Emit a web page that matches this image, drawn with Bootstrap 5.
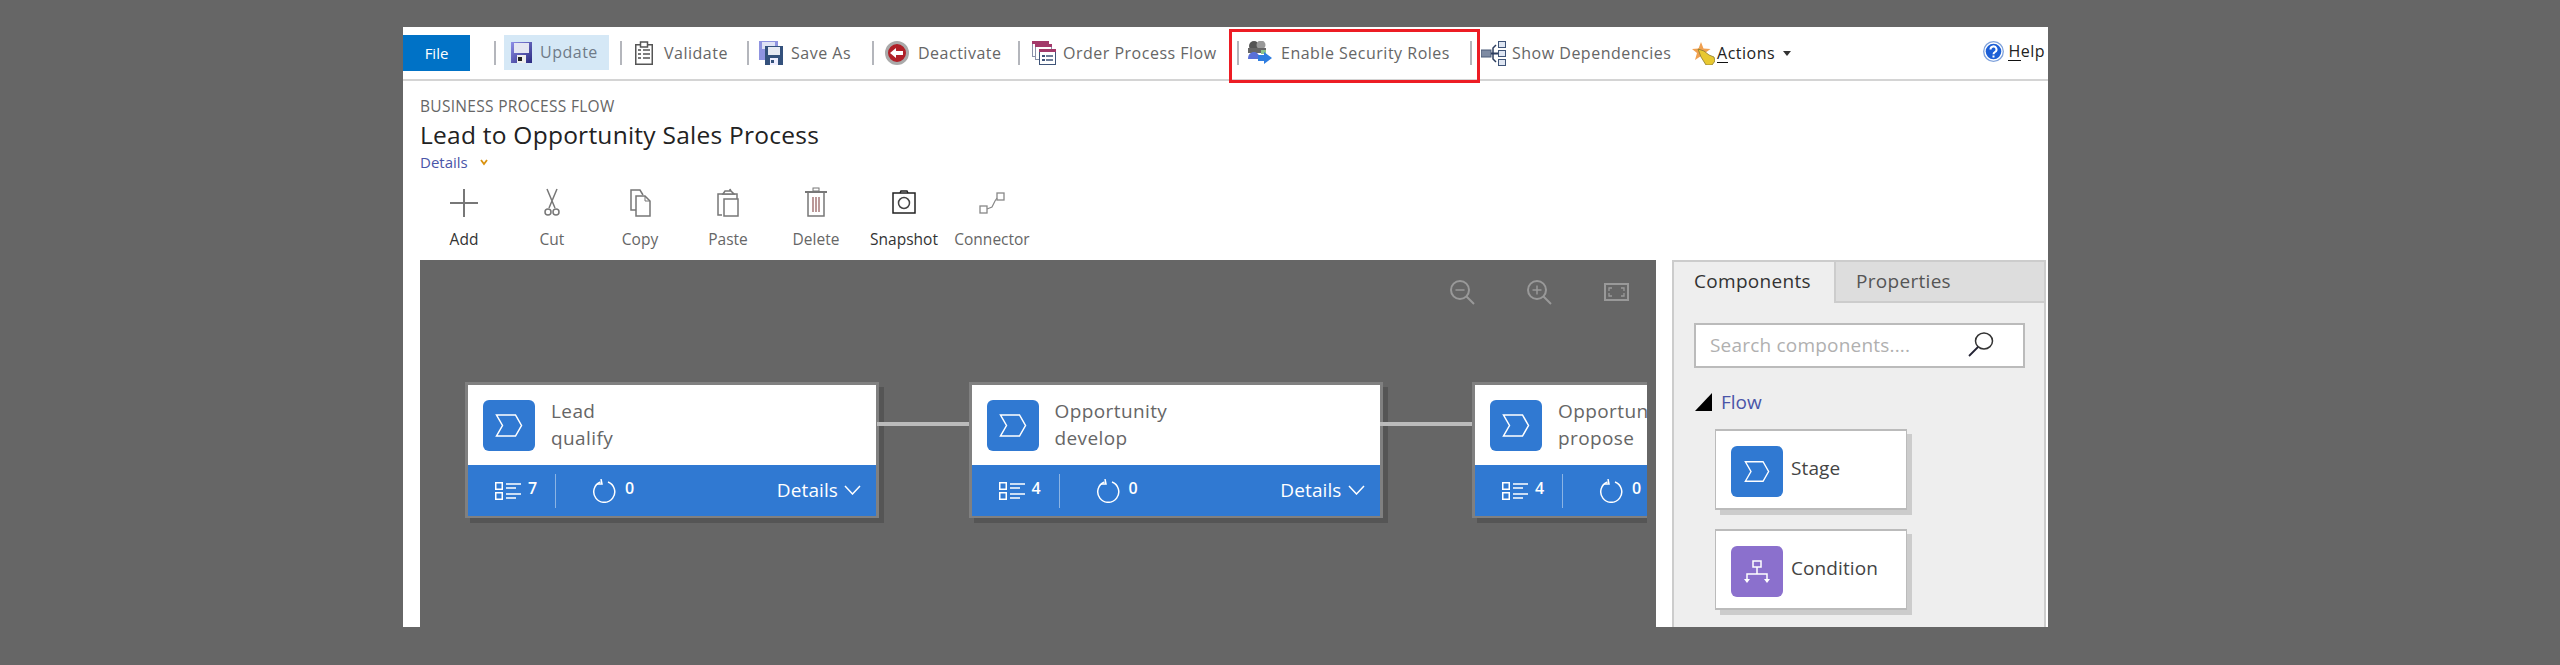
<!DOCTYPE html>
<html lang="en">
<head>
<meta charset="utf-8">
<title>Lead to Opportunity Sales Process</title>
<link href="https://cdn.jsdelivr.net/npm/bootstrap@5.3.0/dist/css/bootstrap.min.css" rel="stylesheet">
<style>
html,body{height:100%;overflow:hidden}
body{background:#666;font-family:"Open Sans","Liberation Sans",sans-serif;color:#555;margin:0}
.shell{margin:27px 0 0 403px;width:1645px;height:600px;background:#fff;overflow:hidden;position:relative}
.tbar{height:54px;border-bottom:2px solid #d4d4d4;font-size:16px;letter-spacing:.5px;line-height:20px;color:#666}
.tb-cell{flex:0 0 auto;height:52px}
.tb-sep{flex:0 0 2px;height:24px;background:#b4b6bc;margin-top:-1px}
.tb-btn{color:#666;text-decoration:none;white-space:nowrap}
.tb-btn svg{flex:0 0 auto;display:block}
.file-cell{width:91px}
.file-btn{--bs-btn-padding-x:0;--bs-btn-padding-y:0;--bs-btn-bg:#0072c6;--bs-btn-border-color:#0072c6;width:67px;height:36px;margin-top:-1px;line-height:34px;font-size:15px;font-weight:500;letter-spacing:0;color:#fff}
.c-update{width:126px}.c-update .tb-btn{margin-left:8px;width:105px;height:35px;padding-left:7px;background:#d5e8f6;gap:8px;margin-top:-2px;color:#6f7b88}
.c-validate{width:127px}.c-validate .tb-btn{margin-left:13px;gap:11px}
.c-saveas{width:125px}.c-saveas .tb-btn{margin-left:10px;gap:8px}
.c-deact{width:146px}.c-deact .tb-btn{margin-left:11px;gap:9px}
.c-order{width:219px}.c-order .tb-btn{margin-left:12px;gap:7px}
.c-enable{width:233px}.c-enable .tb-btn{margin-left:9px;gap:9px}
.c-show{width:222px}.c-show .tb-btn{margin-left:9px;gap:6px}
.c-actions .tb-btn{gap:2px;color:#222}
.c-help{margin-left:auto;padding-right:3px;color:#222;gap:4px;margin-top:-4px}
.c-help .tb-btn{color:#222}
.ul-key{border-bottom:1px solid #111;padding-bottom:0;display:inline-block;line-height:17px}
.caret-down{width:0;height:0;border:4px solid transparent;border-top:5px solid #333;border-bottom:0;margin-left:6px}
.red-box{position:absolute;left:826px;top:2px;width:251px;height:54px;border:3px solid #ed1c24;pointer-events:none}
.head-block{padding:16px 0 0 17px}
.crumb{font-size:15.5px;line-height:19px;letter-spacing:.3px;color:#666}
.page-title{font-size:24.5px;line-height:32px;font-weight:400;color:#222;margin:3px 0 0;letter-spacing:.25px}
.det-link{font-size:15px;line-height:18px;color:#4a55a8;gap:12px;margin-top:2px}
.cmds{margin:16px 0 0 17px;height:73px}
.cmd{flex:0 0 88px;font-size:15.5px;line-height:20px;text-align:center;color:#666;letter-spacing:0}
.cmd svg{display:block;margin:0 auto 12px;height:30px;width:34px}
.cmd.dark{color:#333}
.work{margin:0 0 0 17px;height:367px}
.canvas{flex:0 0 1236px;background:#666;position:relative}
.clip{position:absolute;left:0;top:0;width:1227px;height:367px;overflow:hidden}
.tool-ic{position:absolute;top:20px}
.tool-a{left:1030px}.tool-b{left:1107px}.tool-c{left:1184px;top:23px}
.wire{position:absolute;top:162px;width:92px;height:4px;background:#bbb;z-index:2}
.w1{left:457px}.w2{left:960px}
.fnode{position:absolute;top:122px;width:414px;height:136px;border:3px solid #808080;box-shadow:5px 5px 0 #555;background:#fff}
.n1{left:45px}.n2{left:548.5px}.n3{left:1052px}
.ftop{height:80px;padding:15px 0 0 15px}
.tile{flex:0 0 52px;height:51px;border-radius:6px;background:#3079d2}
.tile.purple{background:#8b70cd}
.ftxt{margin:-2px 0 0 16px;font-size:19px;line-height:27px;color:#666;white-space:nowrap;letter-spacing:.4px}
.fbot{height:51px;background:#3079d2;color:#fff;padding:0 15px 0 27px}
.fnum{font-size:16px;font-weight:600;margin-left:7px;width:10px;line-height:16px;margin-top:-5px}
.fsep{flex:0 0 1px;height:34px;background:#8bb4e4;margin:0 36px 0 17px}
.fzero{margin-left:7px}
.fdet{margin-left:auto;font-size:19px;letter-spacing:.1px;gap:6px;margin-top:-1px}
.side{flex:0 0 374px;margin-left:16px;background:#eee;border:2px solid #ccc;border-bottom:0;height:367px}
.tabs-row{--bs-nav-tabs-border-width:0;height:41px;border-bottom:0;flex-wrap:nowrap}
.tabs-row .nav-link{border:0;border-radius:0;margin:0;height:41px;padding:0;font-size:19px;letter-spacing:.3px;line-height:39px;color:#555;background:#ddd;border-bottom:2px solid #ccc;width:100%;text-align:left}
.tabs-row .tab-a{flex:0 0 162px;background:#eee;color:#333}
.tabs-row .tab-a .nav-link{background:#eee;color:#333;border-bottom:0;border-right:2px solid #ccc;padding-left:20px}
.tabs-row .tab-b{flex:1 1 auto}
.tabs-row .tab-b .nav-link{padding-left:20px}
.searcher{margin:20px 0 0 20px;width:331px;position:relative}
.searcher .form-control{height:45px;border:2px solid #bbb;border-radius:0;font-size:19px;letter-spacing:.2px;padding:0 50px 2px 14px;background:#fff}
.searcher .form-control::placeholder{color:#b0b0b0;opacity:1}
.searcher svg{position:absolute;left:274px;top:9px}
.flow-head{margin:21px 0 0 21px;font-size:19px;line-height:26px;color:#4a55a8;gap:9px}
.pal{width:192px;height:81px;margin-left:41px;border:0;border-top:2px solid #bbb;border-left:1px solid #bbb;border-right:1px solid #bbb;border-bottom:2px solid #bbb;border-radius:0;box-shadow:5px 5px 0 #ccc;padding:15px 0 0 15px;font-size:19px;letter-spacing:.1px;color:#444;gap:8px}
.pal span{margin-top:10px;line-height:24px}
.pal.first{margin-top:14px}
.pal.second{margin-top:19px}
</style>
</head>
<body>
<div class="shell">
  <div class="tbar d-flex align-items-center">
    <div class="tb-cell file-cell d-flex align-items-center"><a class="btn btn-primary rounded-0 file-btn" href="#">File</a></div>

    <div class="tb-cell c-update d-flex align-items-center"><span class="tb-sep"></span>
      <a class="tb-btn d-flex align-items-center" href="#">
        <svg width="21" height="21" viewBox="0 0 21 21"><defs><linearGradient id="fl" x1="0" y1="0" x2="1" y2="1"><stop offset="0" stop-color="#8f8fe8"/><stop offset="1" stop-color="#2a2a80"/></linearGradient></defs><rect width="21" height="21" fill="url(#fl)"/><rect x="3" y="1" width="15" height="10" fill="#e4e6f2"/><rect x="6" y="13" width="9" height="8" fill="#eee"/><rect x="7" y="15" width="4" height="4" fill="#222"/></svg>
        <span>Update</span></a></div>

    <div class="tb-cell c-validate d-flex align-items-center"><span class="tb-sep"></span>
      <a class="tb-btn d-flex align-items-center" href="#">
        <svg width="18" height="24" viewBox="0 0 18 24"><rect x=".75" y="3.75" width="16.5" height="19.5" fill="#fff" stroke="#555" stroke-width="1.5"/><rect x="5.5" y="1" width="7" height="5" fill="#fff" stroke="#555" stroke-width="1.5"/><path d="M3 9h3M3 13h3M3 17h3" stroke="#777" stroke-width="2"/><path d="M8 9h7M8 13h7M8 17h7" stroke="#555" stroke-width="1.3"/></svg>
        <span>Validate</span></a></div>

    <div class="tb-cell c-saveas d-flex align-items-center"><span class="tb-sep"></span>
      <a class="tb-btn d-flex align-items-center" href="#">
        <svg width="24" height="24" viewBox="0 0 24 24"><rect x="0" y="0" width="19" height="19" fill="#8f93e0"/><rect x="3" y="1" width="13" height="7" fill="#dfe2f5"/><rect x="6" y="5" width="18" height="19" fill="#34517c"/><rect x="9" y="6" width="12" height="8" fill="#e6e9f2"/><rect x="11" y="17" width="8" height="7" fill="#eef"/><rect x="12" y="19" width="3" height="3" fill="#34517c"/></svg>
        <span>Save As</span></a></div>

    <div class="tb-cell c-deact d-flex align-items-center"><span class="tb-sep"></span>
      <a class="tb-btn d-flex align-items-center" href="#">
        <svg width="24" height="24" viewBox="0 0 24 24"><circle cx="12" cy="12" r="10.500" fill="#b02028" stroke="#aaa" stroke-width="3"/><path d="M5 12l6-5v3h7v4h-7v3z" fill="#fff"/></svg>
        <span>Deactivate</span></a></div>

    <div class="tb-cell c-order d-flex align-items-center"><span class="tb-sep"></span>
      <a class="tb-btn d-flex align-items-center" href="#">
        <svg width="24" height="24" viewBox="0 0 24 24"><rect x=".5" y=".5" width="16" height="15" fill="#fff" stroke="#8a90a8"/><rect x="0" y="0" width="17" height="3" fill="#a33a6a"/><rect x="3.5" y="3.5" width="16" height="15" fill="#fff" stroke="#8a90a8"/><rect x="3" y="3" width="17" height="3" fill="#a33a6a"/><rect x="7" y="8" width="17" height="16" fill="#3f5478"/><rect x="7" y="8" width="17" height="3" fill="#a33a6a"/><rect x="8" y="11" width="15" height="12" fill="#fff"/><path d="M10 14h3v2h-3zM10 18h3v2h-3z" fill="#3f5478"/><path d="M14 15h7M14 19h7" stroke="#3f5478" stroke-width="1.5"/></svg>
        <span>Order Process Flow</span></a></div>

    <div class="tb-cell c-enable d-flex align-items-center"><span class="tb-sep"></span>
      <a class="tb-btn d-flex align-items-center" href="#">
        <svg width="24" height="24" viewBox="0 0 24 24"><circle cx="6" cy="5" r="5" fill="#555"/><circle cx="13" cy="4" r="4.500" fill="#999"/><rect x="0" y="7" width="18" height="5" fill="#666"/><rect x="13" y="9" width="5" height="4" fill="#8cc48c"/><path d="M0 18c0-5 3-7 6-7s5 2 6 7z" fill="#5a70d8"/><path d="M10 14h6v-3l8 6-8 6v-3h-6z" fill="#2f7de0"/></svg>
        <span>Enable Security Roles</span></a></div>

    <div class="tb-cell c-show d-flex align-items-center"><span class="tb-sep"></span>
      <a class="tb-btn d-flex align-items-center" href="#">
        <svg width="25" height="25" viewBox="0 0 25 25"><rect x="0" y="9" width="10" height="7" fill="#7e8ba3" stroke="#4a5a78"/><path d="M10 12.500h7" stroke="#2e3f60" stroke-width="2"/><path d="M15 4l-3 3v11l3 3" fill="none" stroke="#2e3f60" stroke-width="1.500"/><rect x="17.500" y=".5" width="7" height="6" fill="#dfe6f2" stroke="#3f5478"/><rect x="17.500" y="9.500" width="7" height="6" fill="#dfe6f2" stroke="#3f5478"/><rect x="17.500" y="18.500" width="7" height="6" fill="#dfe6f2" stroke="#3f5478"/></svg>
        <span>Show Dependencies</span></a></div>

    <div class="tb-cell c-actions d-flex align-items-center">
      <a class="tb-btn d-flex align-items-center" href="#">
        <svg width="23" height="23" viewBox="0 0 23 23"><path d="M9 0l2.500 6.500 7 .5-5.500 4 2 7-6-4-6 4 2-7L0 7l6.500-.5z" fill="#f0a050"/><path d="M6 7l6 2 5 4 5 2 1 4-3 4h-6l-5-8z" fill="#e8c830" stroke="#8a7a30" stroke-width=".8"/></svg>
        <span><span class="ul-key">A</span>ctions</span><span class="caret-down"></span></a></div>

    <div class="c-help d-flex align-items-center">
      <svg width="21" height="21" viewBox="0 0 21 21"><circle cx="10.500" cy="10.500" r="9.800" fill="#fff" stroke="#7fa2dc" stroke-width="1.300"/><circle cx="10.500" cy="10.500" r="7.800" fill="#1c5fd6"/><path d="M7.500 8.500a3 3 0 1 1 4.500 2.500c-1 .6-1.500 1-1.500 2.200" fill="none" stroke="#fff" stroke-width="2"/><rect x="9.500" y="14.500" width="2" height="2" fill="#fff"/></svg>
      <a class="tb-btn" href="#"><span class="ul-key">H</span>elp</a></div>
  </div>
  <div class="red-box"></div>

  <div class="head-block">
    <div class="crumb">BUSINESS PROCESS FLOW</div>
    <h1 class="page-title">Lead to Opportunity Sales Process</h1>
    <div class="det-link d-flex align-items-center"><span>Details</span>
      <svg width="8" height="7" viewBox="0 0 8 7"><path d="M1 1l3 4 3-4" fill="none" stroke="#d9920f" stroke-width="1.800"/></svg></div>
  </div>

  <div class="cmds d-flex">
    <div class="cmd dark"><svg viewBox="0 0 34 30"><path d="M17 2v28M3 16h28" stroke="#777" stroke-width="2" fill="none"/></svg>Add</div>
    <div class="cmd"><svg viewBox="0 0 34 30"><path d="M12 2l8 19M22 2l-8 19" stroke="#777" stroke-width="1.500" fill="none"/><circle cx="13" cy="25" r="3" fill="none" stroke="#777" stroke-width="1.500"/><circle cx="21" cy="25" r="3" fill="none" stroke="#777" stroke-width="1.500"/></svg>Cut</div>
    <div class="cmd"><svg viewBox="0 0 34 30"><path d="M16 23H8V3h9l3 5" fill="none" stroke="#777" stroke-width="1.500"/><path d="M13 9h9l5 5v15H13z" fill="#fff" stroke="#777" stroke-width="1.500"/><path d="M22 9v5h5" fill="none" stroke="#777"/></svg>Copy</div>
    <div class="cmd"><svg viewBox="0 0 34 30"><path d="M11 28H7V7h19v5" fill="none" stroke="#777" stroke-width="1.500"/><path d="M12 7l2-3h5v-2h0l1 2 3 3z" fill="#fff" stroke="#777" stroke-width="1.500"/><rect x="13" y="12" width="14" height="17" fill="#fff" stroke="#777" stroke-width="1.500"/></svg>Paste</div>
    <div class="cmd"><svg viewBox="0 0 34 30"><rect x="14" y="1" width="6" height="3" fill="none" stroke="#777"/><path d="M6 5h22" stroke="#777" stroke-width="2"/><path d="M9 6v23h16V6" fill="none" stroke="#777" stroke-width="1.500"/><path d="M13 10h8v15h-8z" fill="#b99"/><path d="M15.500 10v15M18.500 10v15" stroke="#fff"/></svg>Delete</div>
    <div class="cmd dark"><svg viewBox="0 0 34 30"><rect x="6" y="6" width="22" height="20" fill="#fff" stroke="#222" stroke-width="1.500"/><path d="M13 6l1-2h6l1 2" fill="none" stroke="#222" stroke-width="1.500"/><circle cx="17" cy="16" r="5.500" fill="none" stroke="#444" stroke-width="1.500"/></svg>Snapshot</div>
    <div class="cmd"><svg viewBox="0 0 34 30"><rect x="5" y="19" width="7" height="7" fill="#fff" stroke="#888" stroke-width="1.300"/><rect x="22" y="6" width="7" height="7" fill="#fff" stroke="#888" stroke-width="1.300"/><path d="M12 22l5-2 3-6 2-3" fill="none" stroke="#888" stroke-width="1.200"/></svg>Connector</div>
  </div>

  <div class="work d-flex">
    <div class="canvas">
      <svg class="tool-ic tool-a" width="26" height="25" viewBox="0 0 26 25"><circle cx="10" cy="10" r="9" fill="none" stroke="#999" stroke-width="2"/><path d="M5.500 10h9" stroke="#999" stroke-width="1.500"/><path d="M16 16l8 8" stroke="#999" stroke-width="2"/></svg>
      <svg class="tool-ic tool-b" width="26" height="25" viewBox="0 0 26 25"><circle cx="10" cy="10" r="9" fill="none" stroke="#999" stroke-width="2"/><path d="M5.500 10h9M10 5.500v9" stroke="#999" stroke-width="1.500"/><path d="M16 16l8 8" stroke="#999" stroke-width="2"/></svg>
      <svg class="tool-ic tool-c" width="25" height="18" viewBox="0 0 25 18"><rect x="1" y="1" width="23" height="16" fill="none" stroke="#999" stroke-width="2"/><path d="M8 5H5v3M17 5h3v3M8 13H5v-3M17 13h3v-3" fill="none" stroke="#999" stroke-width="1.300"/></svg>
      <div class="clip">
        <div class="wire w1"></div><div class="wire w2"></div>

        <div class="fnode n1">
          <div class="ftop d-flex"><div class="tile d-flex align-items-center justify-content-center"><svg width="28" height="23" viewBox="0 0 28 23"><path d="M1.500 1h19l6 10.500-6 10.500h-19l6-10.500z" fill="none" stroke="#fff" stroke-width="1.500"/></svg></div><div class="ftxt">Lead<br>qualify</div></div>
          <div class="fbot d-flex align-items-center"><svg width="26" height="18" viewBox="0 0 26 18"><g fill="none" stroke="#fff" stroke-width="1.500"><rect x=".75" y=".75" width="6.500" height="6.500"/><rect x=".75" y="10.750" width="6.500" height="6.500"/></g><path d="M11 2h15M11 6h10M11 12h15M11 16h10" stroke="#fff" stroke-width="1.300"/></svg><span class="fnum">7</span><span class="fsep"></span><svg width="26" height="24" viewBox="0 0 26 24"><path d="M16 3a10.500 10.500 0 1 1-7.500 0" fill="none" stroke="#fff" stroke-width="1.500"/><path d="M9 0l1 5-5 0" fill="none" stroke="#fff" stroke-width="1.500"/></svg><span class="fnum fzero">0</span><div class="fdet d-flex align-items-center"><span>Details</span><svg width="17" height="10" viewBox="0 0 17 10"><path d="M1 1l7.500 8L16 1" fill="none" stroke="#fff" stroke-width="1.500"/></svg></div></div>
        </div>

        <div class="fnode n2">
          <div class="ftop d-flex"><div class="tile d-flex align-items-center justify-content-center"><svg width="28" height="23" viewBox="0 0 28 23"><path d="M1.500 1h19l6 10.500-6 10.500h-19l6-10.500z" fill="none" stroke="#fff" stroke-width="1.500"/></svg></div><div class="ftxt">Opportunity<br>develop</div></div>
          <div class="fbot d-flex align-items-center"><svg width="26" height="18" viewBox="0 0 26 18"><g fill="none" stroke="#fff" stroke-width="1.500"><rect x=".75" y=".75" width="6.500" height="6.500"/><rect x=".75" y="10.750" width="6.500" height="6.500"/></g><path d="M11 2h15M11 6h10M11 12h15M11 16h10" stroke="#fff" stroke-width="1.300"/></svg><span class="fnum">4</span><span class="fsep"></span><svg width="26" height="24" viewBox="0 0 26 24"><path d="M16 3a10.500 10.500 0 1 1-7.500 0" fill="none" stroke="#fff" stroke-width="1.500"/><path d="M9 0l1 5-5 0" fill="none" stroke="#fff" stroke-width="1.500"/></svg><span class="fnum fzero">0</span><div class="fdet d-flex align-items-center"><span>Details</span><svg width="17" height="10" viewBox="0 0 17 10"><path d="M1 1l7.500 8L16 1" fill="none" stroke="#fff" stroke-width="1.500"/></svg></div></div>
        </div>

        <div class="fnode n3">
          <div class="ftop d-flex"><div class="tile d-flex align-items-center justify-content-center"><svg width="28" height="23" viewBox="0 0 28 23"><path d="M1.500 1h19l6 10.500-6 10.500h-19l6-10.500z" fill="none" stroke="#fff" stroke-width="1.500"/></svg></div><div class="ftxt">Opportunity<br>propose</div></div>
          <div class="fbot d-flex align-items-center"><svg width="26" height="18" viewBox="0 0 26 18"><g fill="none" stroke="#fff" stroke-width="1.500"><rect x=".75" y=".75" width="6.500" height="6.500"/><rect x=".75" y="10.750" width="6.500" height="6.500"/></g><path d="M11 2h15M11 6h10M11 12h15M11 16h10" stroke="#fff" stroke-width="1.300"/></svg><span class="fnum">4</span><span class="fsep"></span><svg width="26" height="24" viewBox="0 0 26 24"><path d="M16 3a10.500 10.500 0 1 1-7.500 0" fill="none" stroke="#fff" stroke-width="1.500"/><path d="M9 0l1 5-5 0" fill="none" stroke="#fff" stroke-width="1.500"/></svg><span class="fnum fzero">0</span></div>
        </div>
      </div>
    </div>

    <div class="side">
      <ul class="nav nav-tabs tabs-row">
        <li class="nav-item tab-a"><a class="nav-link active" href="#">Components</a></li>
        <li class="nav-item tab-b"><a class="nav-link" href="#">Properties</a></li>
      </ul>
      <div class="searcher">
        <input class="form-control" type="text" placeholder="Search components....">
        <svg width="26" height="25" viewBox="0 0 26 25"><ellipse cx="16" cy="9" rx="8.500" ry="8" fill="none" stroke="#333" stroke-width="1.500"/><path d="M10 15L1 24" stroke="#223" stroke-width="1.800"/></svg>
      </div>
      <div class="flow-head d-flex align-items-center"><svg width="17" height="18" viewBox="0 0 17 18"><path d="M17 0v18H0z" fill="#000"/></svg><span>Flow</span></div>
      <div class="card pal first flex-row">
        <div class="tile d-flex align-items-center justify-content-center"><svg width="26" height="23" viewBox="0 0 28 23"><path d="M1.500 1h19l6 10.500-6 10.500h-19l6-10.500z" fill="none" stroke="#fff" stroke-width="1.500"/></svg></div><span>Stage</span>
      </div>
      <div class="card pal second flex-row">
        <div class="tile purple d-flex align-items-center justify-content-center"><svg width="26" height="24" viewBox="0 0 26 24"><rect x="9" y="1" width="8" height="6" fill="none" stroke="#fff" stroke-width="1.500"/><path d="M13 7v7M3 20v-6h20v6" fill="none" stroke="#fff" stroke-width="1.500"/><path d="M0 19h6l-3 4zM20 19h6l-3 4z" fill="#fff"/></svg></div><span>Condition</span>
      </div>
    </div>
  </div>
</div>
</body>
</html>
